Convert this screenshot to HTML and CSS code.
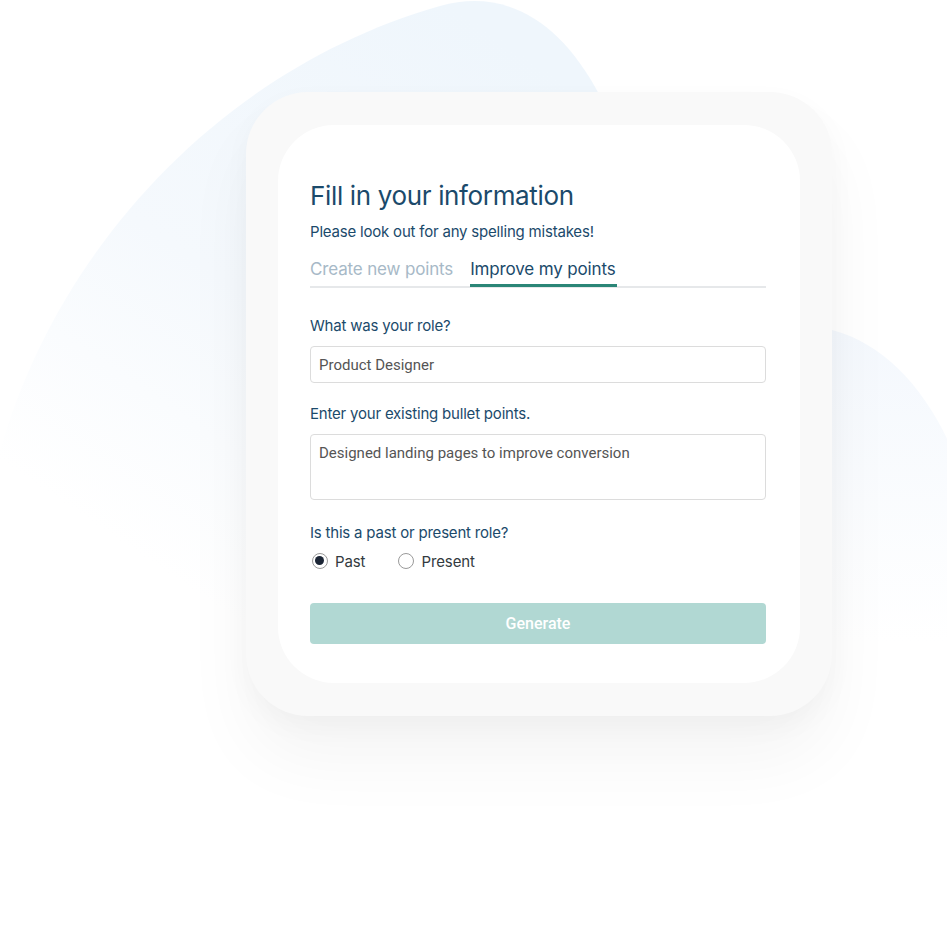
FILE: index.html
```html
<!DOCTYPE html>
<html lang="en">
<head>
    <meta charset="UTF-8">
    <meta name="viewport" content="width=device-width, initial-scale=1.0">
    <title>Fill in your information</title>
    <link rel="stylesheet" href="styles.css">
</head>
<body>
    <!-- Soft background shapes -->
    <svg class="bg-shapes" width="947" height="934" viewBox="0 0 947 934">
        <defs>
            <linearGradient id="blobLeft" x1="0.75" y1="0" x2="0.15" y2="1">
                <stop offset="0" stop-color="#eff6fc"/>
                <stop offset="0.45" stop-color="#f5f9fd"/>
                <stop offset="0.8" stop-color="#ffffff"/>
            </linearGradient>
            <linearGradient id="blobRight" x1="0" y1="0" x2="0" y2="1">
                <stop offset="0" stop-color="#f4f8fd"/>
                <stop offset="0.8" stop-color="#ffffff"/>
            </linearGradient>
        </defs>
        <path d="M -20 560 C 0 320 180 80 440 6 C 505 -12 560 20 600 96 L 600 700 L -20 700 Z" fill="url(#blobLeft)"/>
        <path d="M 832 330 C 890 345 935 400 960 470 L 960 720 L 832 720 Z" fill="url(#blobRight)"/>
    </svg>

    <div class="page">
        <div class="frame">
            <div class="form-card">
                <h1 class="form-title">Fill in your information</h1>
                <p class="form-subtitle">Please look out for any spelling mistakes!</p>

                <div class="tabs">
                    <div class="tab">Create new points</div>
                    <div class="tab active">Improve my points</div>
                </div>

                <label class="field-label" for="role">What was your role?</label>
                <input class="text-input" id="role" type="text" value="Product Designer">

                <label class="field-label spaced" for="bullets">Enter your existing bullet points.</label>
                <textarea class="text-area" id="bullets">Designed landing pages to improve conversion</textarea>

                <div class="field-label spaced-lg">Is this a past or present role?</div>
                <div class="radio-row">
                    <label class="radio-option">
                        <span class="radio checked"></span>
                        Past
                    </label>
                    <label class="radio-option">
                        <span class="radio"></span>
                        Present
                    </label>
                </div>

                <button class="generate-btn" type="button">Generate</button>
            </div>
        </div>
    </div>
</body>
</html>
```

FILE: styles.css
```css
body {
    margin: 0;
    background: #ffffff;
    font-family: Inter, "Noto Sans", sans-serif;
    color: #1b4a6b;
    overflow: hidden;
}
.bg-shapes {
    position: absolute;
    top: 0;
    left: 0;
    z-index: 0;
}
.page {
    position: relative;
    z-index: 1;
    padding: 92px 0 0 246px;
    height: 842px;
}
.frame {
    width: 522px;
    padding: 33px 32px;
    background: #f9f9f9;
    border-radius: 62px;
    box-shadow: 0 44px 70px rgba(0, 0, 0, 0.045), 0 10px 28px rgba(0, 0, 0, 0.03);
}
.form-card {
    background: #ffffff;
    border-radius: 56px;
    padding: 55px 34px 39px 32px;
}
.form-title {
    margin: 0;
    font-size: 26px;
    line-height: 32px;
    font-weight: 400;
    color: #1b4a6b;
    letter-spacing: -0.35px;
}
.form-subtitle {
    margin: 10px 0 0;
    font-size: 15px;
    line-height: 20px;
    color: #1b4a6b;
    letter-spacing: -0.2px;
}
.tabs {
    display: flex;
    gap: 17px;
    margin-top: 16px;
    border-bottom: 2px solid #e6e8ea;
}
.tab {
    font-size: 17px;
    line-height: 22px;
    padding-bottom: 4px;
    color: #a7b9c7;
    letter-spacing: -0.15px;
}
.tab.active {
    color: #1b4a6b;
    border-bottom: 3px solid #2b8677;
    margin-bottom: -1px;
    padding-right: 1px;
}
.field-label {
    display: block;
    margin-top: 28px;
    margin-bottom: 10px;
    font-size: 15px;
    line-height: 20px;
    color: #1b4a6b;
    letter-spacing: -0.2px;
}
.field-label.spaced {
    margin-top: 21px;
}
.field-label.spaced-lg {
    margin-top: 23px;
    margin-bottom: 8px;
}
.text-input,
.text-area {
    display: block;
    box-sizing: border-box;
    width: 100%;
    border: 1px solid #dcdcdc;
    border-radius: 4px;
    background: #fff;
    font-family: Roboto, "Liberation Sans", sans-serif;
    font-size: 15px;
    color: #555555;
    padding: 0 8px;
    outline: none;
}
.text-input {
    height: 37px;
}
.text-area {
    height: 66px;
    padding-top: 9px;
    resize: none;
    line-height: 19px;
}
.radio-row {
    display: flex;
    gap: 33px;
    height: 20px;
    align-items: center;
    padding-left: 2px;
}
.radio-option {
    display: flex;
    align-items: center;
    gap: 7px;
    font-size: 15px;
    color: #333a40;
    letter-spacing: -0.1px;
}
.radio {
    width: 16px;
    height: 16px;
    box-sizing: border-box;
    border: 1.5px solid #9a9a9a;
    border-radius: 50%;
    position: relative;
}
.radio.checked::after {
    content: "";
    position: absolute;
    top: 2px;
    left: 2px;
    width: 9px;
    height: 9px;
    border-radius: 50%;
    background: #1c2636;
}
.generate-btn {
    display: block;
    width: 100%;
    height: 41px;
    margin-top: 32px;
    border: none;
    border-radius: 4px;
    background: #b1d8d3;
    color: #ffffff;
    font-family: Roboto, "Liberation Sans", sans-serif;
    font-size: 16px;
    font-weight: 500;
    cursor: pointer;
}
```
